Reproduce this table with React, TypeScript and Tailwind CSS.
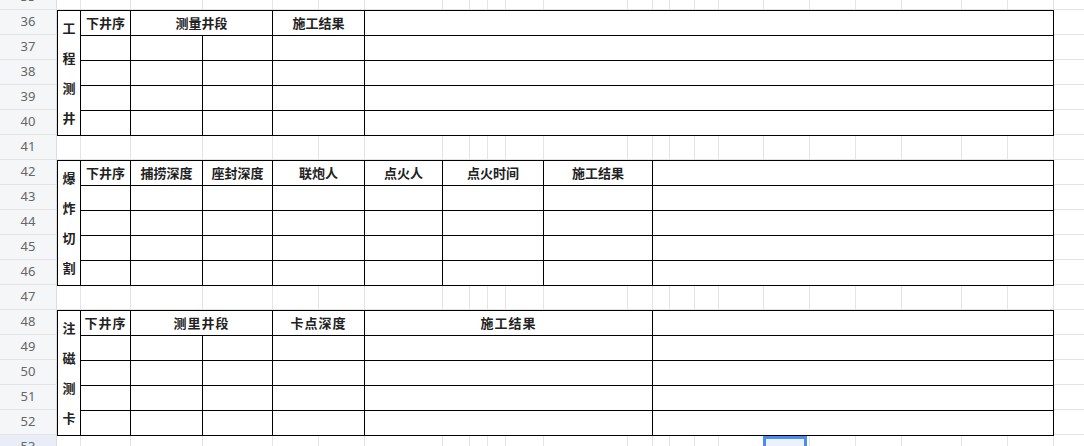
import React from "react";

const GRID = [
  "w-[24px]", "w-[50px]", "w-[72px]", "w-[70px]", "w-[46px]", "w-[46px]", "w-[78px]", "w-[27px]",
  "w-[18px]", "w-[18px]", "w-[38px]", "w-[84px]", "w-[25px]", "w-[17px]", "w-[25px]", "w-[24px]",
  "w-[45px]", "w-[46px]", "w-[46px]", "w-[46px]", "w-[60px]", "w-[46px]", "w-[46px]", "w-[80px]",
];

const cjk = "font-['Microsoft_YaHei','Noto_Sans_CJK_SC',sans-serif]";

function BlankRow({ h, selected }: { h: string; selected?: number }) {
  return (
    <div className={`flex shrink-0 border-b border-[#e3e3e3] ${h}`}>
      {GRID.map((w, i) => (
        <div key={i} className={`relative shrink-0 h-full border-r border-[#e3e3e3] ${w}`}>
          {selected === i && (
            <div className="absolute left-[-1px] top-0 w-[44px] h-[30px] border-[3px] border-[#4b8bf5] bg-[#ebf2fe]" />
          )}
        </div>
      ))}
    </div>
  );
}

type Head = { t: string; span?: boolean };

function Table({
  gridClass,
  label,
  head,
  dataCols,
  spaced,
}: {
  gridClass: string;
  label: string;
  head: Head[];
  dataCols: number;
  spaced?: boolean;
}) {
  const cell = "border-r border-b border-black";
  return (
    <div className="flex shrink-0 h-[126px]">
      <div className={`grid shrink-0 border-t border-l border-black grid-rows-[repeat(5,25px)] ${gridClass}`}>
        <div className={`row-span-5 ${cell} flex flex-col items-center justify-center`}>
          {label.split("").map((c, i) => (
            <span key={i} className={`text-[13px] font-bold leading-[30px] text-[#222] ${cjk}`}>
              {c}
            </span>
          ))}
        </div>
        {head.map((h, i) => (
          <div
            key={i}
            className={`${cell} ${h.span ? "col-span-2" : ""} flex items-center justify-center pb-px text-[13px] font-bold text-[#222] ${cjk} ${spaced ? "tracking-[1px]" : ""}`}
          >
            {h.t}
          </div>
        ))}
        {Array.from({ length: dataCols * 4 }).map((_, i) => (
          <div key={i} className={cell} />
        ))}
      </div>
      <div className="flex flex-col w-[80px] shrink-0">
        {[0, 1, 2, 3, 4].map((i) => (
          <div key={i} className="h-[25px] shrink-0 border-b border-[#e3e3e3] border-r" />
        ))}
      </div>
    </div>
  );
}

export default function App() {
  const rows = [35, 36, 37, 38, 39, 40, 41, 42, 43, 44, 45, 46, 47, 48, 49, 50, 51, 52, 53];
  return (
    <div className="w-[1084px] h-[446px] overflow-hidden bg-white">
      <div className="flex -mt-[15px]">
        <div className="flex flex-col w-[57px] shrink-0 border-r border-[#dcdcdc]">
          {rows.map((r) => (
            <div
              key={r}
              className={`h-[25px] shrink-0 flex items-center justify-center border-b border-[#e3e3e3] text-[13px] text-[#666] font-['Noto_Sans','Microsoft_YaHei',sans-serif] ${
                r === 53 ? "bg-[#e8edf8]" : "bg-[#f5f6f7]"
              }`}
            >
              {r}
            </div>
          ))}
        </div>
        <div className="flex flex-col">
          <BlankRow h="h-[25px]" />
          <Table
            gridClass="grid-cols-[23px_50px_72px_70px_92px_689px]"
            label="工程测井"
            head={[{ t: "下井序" }, { t: "测量井段", span: true }, { t: "施工结果" }, { t: "" }]}
            dataCols={5}
          />
          <BlankRow h="h-[24px]" />
          <Table
            gridClass="grid-cols-[23px_50px_72px_70px_92px_78px_101px_109px_401px]"
            label="爆炸切割"
            head={[
              { t: "下井序" },
              { t: "捕捞深度" },
              { t: "座封深度" },
              { t: "联炮人" },
              { t: "点火人" },
              { t: "点火时间" },
              { t: "施工结果" },
              { t: "" },
            ]}
            dataCols={8}
          />
          <BlankRow h="h-[24px]" />
          <Table
            gridClass="grid-cols-[23px_50px_72px_70px_92px_288px_401px]"
            label="注磁测卡"
            head={[{ t: "下井序" }, { t: "测里井段", span: true }, { t: "卡点深度" }, { t: "施工结果" }, { t: "" }]}
            dataCols={6}
            spaced
          />
          <BlankRow h="h-[24px]" selected={17} />
        </div>
      </div>
    </div>
  );
}
